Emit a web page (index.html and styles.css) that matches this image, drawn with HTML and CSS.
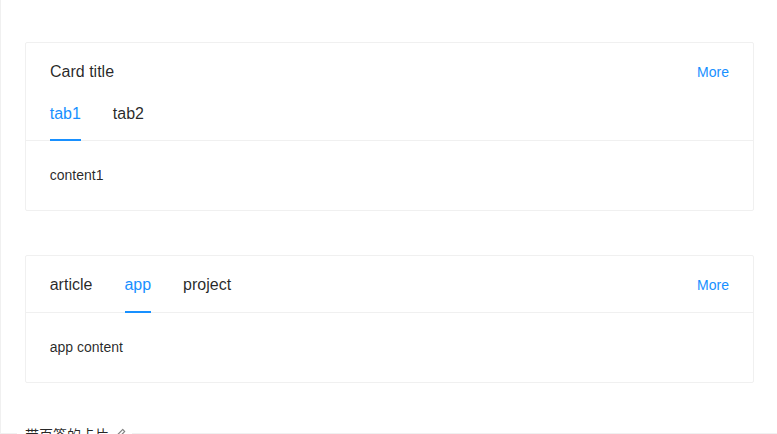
FILE: index.html
```html
<!DOCTYPE html>
<html lang="zh-CN">
<head>
    <meta charset="UTF-8">
    <meta name="viewport" content="width=device-width, initial-scale=1.0">
    <title>Card tabs</title>
    <link rel="stylesheet" href="styles.css">
</head>
<body>
    <div class="demo-box">
        <div class="card">
            <div class="card-head">
                <div class="card-title-row">
                    <span class="card-title">Card title</span>
                    <a class="more" href="#">More</a>
                </div>
                <div class="tabs">
                    <span class="tab active">tab1</span>
                    <span class="tab">tab2</span>
                </div>
            </div>
            <div class="card-body">content1</div>
        </div>

        <div class="card">
            <div class="card-head">
                <div class="tabs-row">
                    <div class="tabs">
                        <span class="tab">article</span>
                        <span class="tab active">app</span>
                        <span class="tab">project</span>
                    </div>
                    <a class="more" href="#">More</a>
                </div>
            </div>
            <div class="card-body">app content</div>
        </div>

        <div class="demo-title">
            <span>带页签的卡片</span>
            <svg class="edit-icon" viewBox="64 64 896 896" width="14" height="14">
                <path d="M257.7 752c2 0 4-.2 6-.5L431.9 722c2-.4 3.9-1.3 5.3-2.8l423.9-423.9a9.96 9.96 0 0 0 0-14.1L694.9 114.9c-1.9-1.9-4.4-2.9-7.1-2.9s-5.2 1-7.1 2.9L256.8 538.8c-1.5 1.5-2.4 3.3-2.8 5.3l-29.5 168.2a33.5 33.5 0 0 0 9.4 29.8c6.6 6.4 14.9 9.9 23.8 9.9zm67.4-174.4L687.8 215l73.3 73.3-362.7 362.6-88.9 15.7 15.6-89zM880 836H144c-17.7 0-32 14.3-32 32v36c0 4.4 3.6 8 8 8h784c4.4 0 8-3.6 8-8v-36c0-17.7-14.3-32-32-32z"/>
            </svg>
        </div>
    </div>
</body>
</html>
```

FILE: styles.css
```css
* {
    margin: 0;
    padding: 0;
    box-sizing: border-box;
}

html, body {
    height: 100%;
    overflow: hidden;
}

body {
    background-color: #fff;
    color: rgba(0, 0, 0, 0.85);
    font-family: 'Liberation Sans', 'Noto Sans CJK SC', sans-serif;
    font-size: 14px;
    line-height: 22px;
}

.demo-box {
    position: relative;
    height: 434px;
    padding: 42px 23px 0 24px;
    border-left: 1px solid #f0f0f0;
    border-bottom: 1px solid #f0f0f0;
}

.card {
    border: 1px solid #f0f0f0;
    border-radius: 2px;
    margin-bottom: 44px;
}

.card-head {
    border-bottom: 1px solid #f0f0f0;
    padding: 0 24px;
}

.card-title-row {
    display: flex;
    justify-content: space-between;
    align-items: center;
    height: 57px;
}

.card-title {
    font-size: 16px;
}

.tabs-row {
    display: flex;
    justify-content: space-between;
    align-items: center;
    height: 56px;
}

.tabs-row .more {
    margin-top: 2px;
}

.tabs {
    display: flex;
    gap: 32px;
    font-size: 16px;
    height: 40px;
}

.tabs-row .tabs {
    height: 56px;
}

.tab {
    display: block;
    height: 41px;
    line-height: 24px;
    padding: 2px 0.3px 0 0;
    text-indent: -0.3px;
}

.tabs-row .tab {
    height: 57px;
    padding-top: 17px;
}

.tab.active {
    color: #1890ff;
    border-bottom: 2px solid #1890ff;
}

.more {
    color: #1890ff;
    text-decoration: none;
}

.card-body {
    padding: 23px 24px 24px;
    text-indent: -0.3px;
}

/* title sits on the bottom border of the box */
.demo-title {
    position: absolute;
    left: 16px;
    top: 423px;
    display: flex;
    align-items: center;
    gap: 4px;
    padding: 1px 8px;
    background-color: #fff;
}

.edit-icon {
    flex-shrink: 0;
    margin-right: -3px;
    fill: #808080;
}
```
